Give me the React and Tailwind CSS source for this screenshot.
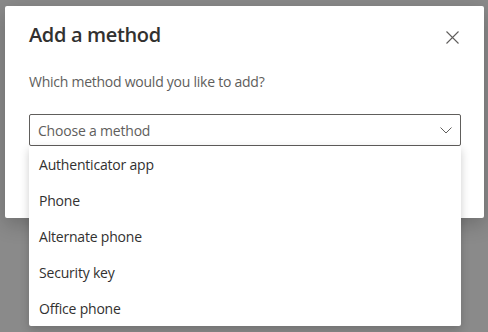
import React from "react";

const items = ["Authenticator app", "Phone", "Alternate phone", "Security key", "Office phone"];

export default function App() {
  return (
    <div
      className="w-[488px] h-[332px] bg-[#8a8a8a] overflow-hidden pt-[6px] pl-[5px]"
      style={{ fontFamily: '"Open Sans", "Noto Sans", sans-serif' }}
    >
      <div className="relative w-[479px] h-[212px] bg-white rounded-[2px] shadow-[0_6px_20px_rgba(0,0,0,0.22)] pl-6 pr-[23px] pt-[15px]">
        <div className="flex items-start justify-between">
          <h1 className="text-[20px] leading-[28px] font-semibold text-[#323130] tracking-[-0.35px]">Add a method</h1>
          <button className="mt-[10px] mr-[2px] text-[#605e5c]" aria-label="Close">
            <svg width="13" height="13" viewBox="0 0 13 13" fill="none" stroke="#605e5c" strokeWidth="1.1">
              <path d="M0.5 0.5 L12.5 12.5 M12.5 0.5 L0.5 12.5" />
            </svg>
          </button>
        </div>
        <p className="mt-[23px] text-[14px] leading-[20px] text-[#605e5c] tracking-[-0.25px]">Which method would you like to add?</p>
        <div className="relative mt-[22px]">
          <div className="h-[32px] border border-[#605e5c] rounded-[2px] flex items-center justify-between pl-[8px] pr-[8px]">
            <span className="text-[14px] text-[#605e5c] tracking-[-0.2px]">Choose a method</span>
            <svg width="12" height="7" viewBox="0 0 12 7" fill="none" stroke="#605e5c" strokeWidth="1">
              <path d="M0.5 0.5 L6 6 L11.5 0.5" />
            </svg>
          </div>
          <ul className="absolute left-0 right-0 top-[32px] bg-white shadow-[0_3px_10px_rgba(0,0,0,0.2)] rounded-[2px] z-10">
            {items.map((t) => (
              <li key={t} className="h-[36px] flex items-center pl-[10px] text-[14px] text-[#323130] tracking-[-0.2px]">
                {t}
              </li>
            ))}
          </ul>
        </div>
      </div>
    </div>
  );
}
